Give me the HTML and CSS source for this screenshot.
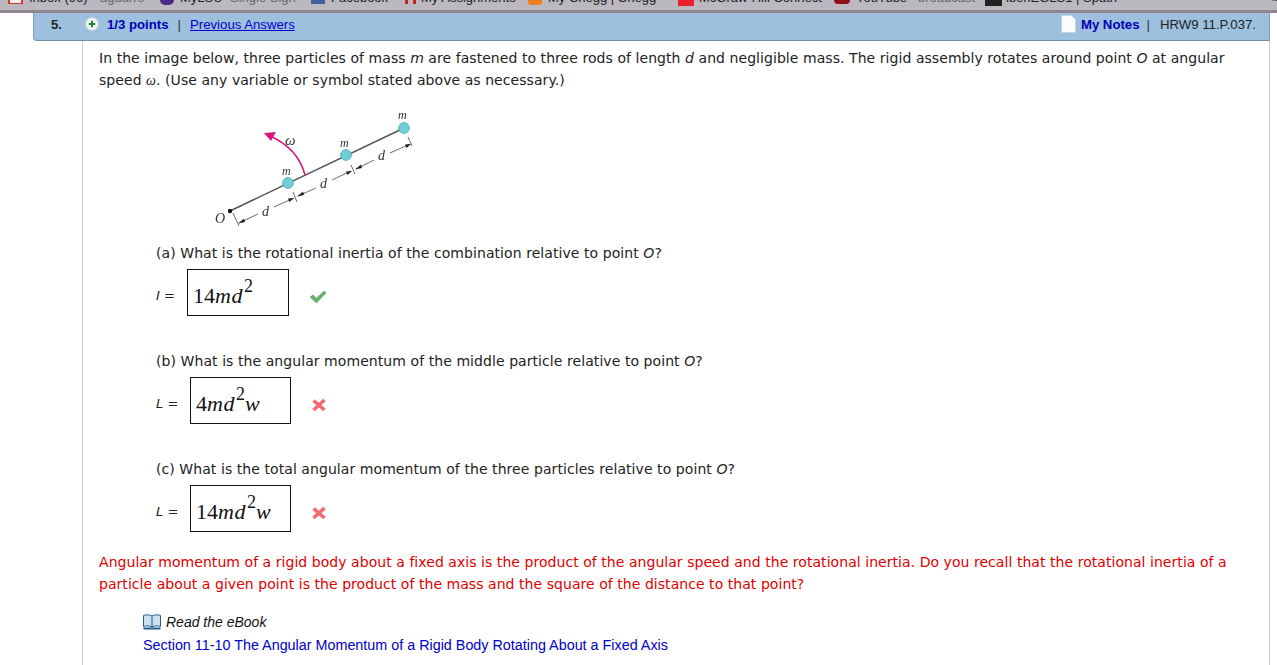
FILE: index.html
```html
<!DOCTYPE html>
<html lang="en">
<head>
  <meta charset="utf-8">
  <title>HRW9 11.P.037</title>
  <link rel="stylesheet" href="styles.css">
</head>
<body>
  <div class="bookmarks">
    <span class="icon icon-gmail"></span><span class="mark mark-inbox">Inbox (96)</span><span class="mark mark-agu fade">aguarrs</span>
    <span class="icon icon-lsu"></span><span class="mark mark-lsu">MyLSU</span><span class="mark mark-sign fade">Single Sign</span>
    <span class="icon icon-fb"></span><span class="mark mark-fb">Facebook</span>
    <span class="icon icon-a"></span><span class="mark mark-assign">My Assignments</span>
    <span class="icon icon-chegg"></span><span class="mark mark-chegg">My Chegg | Chegg</span>
    <span class="icon icon-mcg"></span><span class="mark mark-mcg">McGraw-Hill Connect</span>
    <span class="icon icon-yt"></span><span class="mark mark-yt">YouTube</span><span class="mark mark-cast fade">broadcast</span>
    <span class="icon icon-puzzle"></span><span class="mark mark-iben">ibenEGLS1 | Spath</span>
    <span class="mark mark-more">»</span>
  </div>

  <div class="header">
    <div class="header-left">
      <span class="number">5.</span>
      <span class="plus">
        <svg viewBox="0 0 14 14" width="14" height="14">
          <circle cx="7" cy="7" r="6.5" fill="#f2f4f3" stroke="#c5ccd2"/>
          <path d="M7 3.8v6.4M3.8 7h6.4" stroke="#1d8a2c" stroke-width="2"/>
        </svg>
      </span>
      <span class="points">1/3 points</span>
      <span class="sep">|</span>
      <a class="prev" href="#">Previous Answers</a>
    </div>
    <div class="header-right">
      <svg class="note" viewBox="0 0 15 18" width="15" height="18">
        <path d="M.5.5h10l4 4v13H.5z" fill="#fbfcfc" stroke="#c6d3de"/>
      </svg>
      <span class="notes">My Notes</span>
      <span class="sep">|</span>
      <span class="code">HRW9 11.P.037.</span>
    </div>
  </div>

  <div class="content">
    <p class="intro">In the image below, three particles of mass <i>m</i> are fastened to three rods of length <i>d</i> and negligible mass. The rigid assembly rotates around point <i>O</i> at angular speed <i class="omega">ω</i>. (Use any variable or symbol stated above as necessary.)</p>

    <svg class="figure" viewBox="0 0 230 135" width="230" height="135">
      <line x1="30" y1="110" x2="204" y2="27" stroke="#555" stroke-width="1.5"/>
      <path d="M105 74C100 55 88 43 70 35" fill="none" stroke="#d6187c" stroke-width="1.6"/>
      <path d="M64 32l12-1-5 9z" fill="#d6187c"/>
      <circle cx="30" cy="110" r="2.2" fill="#111"/>
      <g fill="#6fcfd8" stroke="#4aa9b5" stroke-width=".8">
        <circle cx="88" cy="82" r="5.4"/>
        <circle cx="146" cy="54" r="5.4"/>
        <circle cx="204" cy="27" r="5.4"/>
      </g>
      <g stroke="#444" stroke-width=".8">
        <line x1="33" y1="112" x2="39" y2="125"/>
        <line x1="93" y1="91" x2="97" y2="101"/>
        <line x1="151" y1="64" x2="155" y2="73"/>
        <line x1="208" y1="36" x2="212" y2="45"/>
        <line x1="39" y1="122" x2="58" y2="113"/>
        <line x1="74" y1="106" x2="94" y2="97"/>
        <line x1="98" y1="95" x2="116" y2="87"/>
        <line x1="132" y1="79" x2="151" y2="70"/>
        <line x1="156" y1="68" x2="174" y2="59"/>
        <line x1="190" y1="52" x2="210" y2="43"/>
      </g>
      <g fill="#222">
        <path d="M38 122.500l6-5 1 3.500z"/>
        <path d="M94 97l-6 .5 1.500 3.500z"/>
        <path d="M97 95.500l6-5 1 3.500z"/>
        <path d="M152 70l-6 .5 1.500 3.500z"/>
        <path d="M155 68.500l6-5 1 3.500z"/>
        <path d="M211 43l-6 .5 1.500 3.500z"/>
      </g>
      <g class="fig-text">
        <text x="15" y="122" font-size="14">O</text>
        <text x="62" y="115" font-size="14">d</text>
        <text x="120" y="87" font-size="14">d</text>
        <text x="178" y="59" font-size="14">d</text>
        <text x="82" y="74" font-size="12">m</text>
        <text x="140" y="46" font-size="12">m</text>
        <text x="198" y="18" font-size="12">m</text>
        <text x="85" y="44" font-size="15">ω</text>
      </g>
    </svg>

    <div class="question">
      <p class="ask">(a) What is the rotational inertia of the combination relative to point <i>O</i>?</p>
      <div class="answer">
        <span class="label"><i>I</i> =</span>
        <span class="box box-a">14<i>md</i><sup>2</sup></span>
        <svg class="mark-icon" viewBox="0 0 18 14" width="18" height="14">
          <path d="M1 7l3-2 3.500 3L15 1l2 2-9.500 10z" fill="#6db26b" stroke="#4f9a50" stroke-width=".5"/>
        </svg>
      </div>
    </div>

    <div class="question">
      <p class="ask">(b) What is the angular momentum of the middle particle relative to point <i>O</i>?</p>
      <div class="answer">
        <span class="label"><i>L</i> =</span>
        <span class="box">4<i>md</i><sup>2</sup><i>w</i></span>
        <svg class="mark-icon" viewBox="0 0 16 14" width="16" height="14">
          <path d="M2.500 2.500l11 9.500M13.500 2l-11 10" stroke="#f4696f" stroke-width="3.600"/>
        </svg>
      </div>
    </div>

    <div class="question question-last">
      <p class="ask">(c) What is the total angular momentum of the three particles relative to point <i>O</i>?</p>
      <div class="answer">
        <span class="label"><i>L</i> =</span>
        <span class="box">14<i>md</i><sup>2</sup><i>w</i></span>
        <svg class="mark-icon" viewBox="0 0 16 14" width="16" height="14">
          <path d="M2.500 2.500l11 9.500M13.500 2l-11 10" stroke="#f4696f" stroke-width="3.600"/>
        </svg>
      </div>
    </div>

    <p class="hint">Angular momentum of a rigid body about a fixed axis is the product of the angular speed and the rotational inertia. Do you recall that the rotational inertia of a particle about a given point is the product of the mass and the square of the distance to that point?</p>

    <div class="ebook">
      <div class="read">
        <svg viewBox="0 0 18 16" width="18" height="16">
          <path d="M.5 1.500C3 .5 6 .5 9 2c3-1.500 6-1.500 8.500-.5v11c-2.500-1-5.500-1-8.500.5-3-1.500-6-1.500-8.500-.5z" fill="#cfe0ee" stroke="#1f5f93"/>
          <path d="M9 2v11" stroke="#1f5f93"/>
          <path d="M.5 14.500h17" stroke="#1f5f93" stroke-width="2"/>
        </svg>
        <i>Read the eBook</i>
      </div>
      <a class="section" href="#">Section 11-10 The Angular Momentum of a Rigid Body Rotating About a Fixed Axis</a>
    </div>
  </div>
</body>
</html>
```

FILE: styles.css
```css
html, body {
  margin: 0;
  padding: 0;
  height: 665px;
  overflow: hidden;
  background: #fff;
}

body {
  font-family: "DejaVu Sans", Verdana, sans-serif;
  font-size: 14px;
  color: #222;
}

/* browser bookmarks bar, only its lower edge is in the shot */
.bookmarks {
  height: 10px;
  background: #bcb8bf;
  border-bottom: 3px solid #8f8490;
  overflow: hidden;
  display: flex;
  align-items: flex-start;
  font-family: "Liberation Sans", Arial, sans-serif;
  font-size: 13px;
  line-height: 13px;
  white-space: nowrap;
}

.mark {
  margin-top: -9px;
  color: #222;
  flex: none;
}

.fade {
  color: #666;
}

.icon {
  height: 5px;
  flex: none;
}

.icon-gmail { margin-left: 8px; width: 15px; height: 4px; background: #f4f0f0; border: solid #d8352c; border-width: 0 2px 1px; box-sizing: border-box; }
.mark-inbox { margin-left: 6px; width: 56px; }
.mark-agu { margin-left: 15px; width: 45px; }
.icon-lsu { margin-left: 15px; width: 14px; height: 5px; background: #4a2a85; border-radius: 0 0 7px 7px; }
.mark-lsu { margin-left: 6px; width: 36px; }
.mark-sign { margin-left: 14px; width: 60px; }
.icon-fb { margin-left: 21px; width: 14px; height: 4px; background: #3f5f9e; }
.mark-fb { margin-left: 6px; width: 52px; }
.icon-a { margin-left: 22px; width: 11px; height: 4px; border: solid #c8201c; border-width: 0 3px; box-sizing: border-box; }
.mark-assign { margin-left: 5px; width: 89px; }
.icon-chegg { margin-left: 18px; width: 14px; background: #f07d1f; border-radius: 0 0 3px 3px; }
.mark-chegg { margin-left: 6px; width: 92px; }
.icon-mcg { margin-left: 38px; width: 16px; height: 6px; background: #e8202a; }
.mark-mcg { margin-left: 5px; width: 116px; }
.icon-yt { margin-left: 19px; width: 16px; height: 4px; background: #8f1014; border-radius: 0 0 5px 5px; }
.mark-yt { margin-left: 6px; width: 49px; }
.mark-cast { margin-left: 13px; width: 52px; }
.icon-puzzle { margin-left: 15px; width: 17px; height: 6px; background: #222; }
.mark-iben { margin-left: 4px; width: 118px; }
.mark-more { margin-left: 148px; }

.header {
  margin: 0 7px 0 33px;
  height: 28px;
  padding-bottom: 5px;
  box-sizing: border-box;
  background: #9dc0de;
  border-bottom: 1px solid #6f8fa9;
  border-left: 1px solid #7f9fb9;
  border-right: 1px solid #7f9fb9;
  border-radius: 0 0 0 4px;
  display: flex;
  justify-content: space-between;
  align-items: center;
  font-family: "Liberation Sans", Arial, sans-serif;
  font-size: 13.2px;
}

.header-left,
.header-right {
  display: flex;
  align-items: center;
}

.number {
  font-weight: bold;
  margin-left: 17px;
  width: 34px;
}

.plus {
  display: flex;
  width: 22px;
}

.points {
  font-weight: bold;
  color: #0000b4;
}

.sep {
  margin: 0 9px;
  color: #333;
}

.prev {
  color: #0000c8;
}

.note {
  margin-right: 5px;
}

.notes {
  font-weight: bold;
  color: #0000b4;
}

.header-right .sep {
  margin: 0 10px 0 7px;
}

.code {
  margin-right: 13px;
  color: #222;
}

.content {
  margin: 0 7px 0 82px;
  height: 630px;
  padding: 6px 0 0 16px;
  border-left: 1px solid #ccc;
  border-right: 1px solid #ccc;
  box-sizing: border-box;
}

.intro {
  margin: 0;
  line-height: 22px;
  letter-spacing: 0.06px;
  width: 1140px;
}

.omega {
  font-family: "Liberation Serif", serif;
}

.figure {
  display: block;
  margin: 9px 0 0 101px;
  filter: blur(0.35px);
}

.fig-text {
  font-family: "Liberation Serif", serif;
  font-style: italic;
  fill: #333;
}

.question {
  margin: 6px 0 0 57px;
}

.question + .question {
  margin-top: 34px;
}

.ask {
  margin: 0;
  line-height: 22px;
  letter-spacing: 0.07px;
}

.answer {
  display: flex;
  align-items: center;
  height: 47px;
  margin-top: 5px;
}

.label {
  font-size: 13px;
  width: 34px;
  position: relative;
  top: 3px;
}

.box {
  box-sizing: border-box;
  width: 101px;
  height: 47px;
  border: 1px solid #111;
  padding: 14px 0 0 5px;
  font-family: "Liberation Serif", serif;
  font-size: 22px;
  line-height: 24px;
  color: #111;
  white-space: nowrap;
}

.box i {
  letter-spacing: 0.6px;
}

.box-a {
  margin-left: -3px;
  width: 102px;
}

.box sup {
  font-size: 18px;
  line-height: 0;
  vertical-align: 11px;
  margin: 0 0 0 1px;
}

.mark-icon {
  margin-left: 20px;
  position: relative;
  top: 4px;
}

.hint {
  margin: 19px 0 0;
  color: #e00000;
  line-height: 22px;
  letter-spacing: 0.05px;
  width: 1140px;
}

.ebook {
  margin: 16px 0 0 44px;
  font-family: "Liberation Sans", Arial, sans-serif;
  font-size: 14px;
}

.read {
  display: flex;
  align-items: center;
  gap: 5px;
  height: 22px;
  color: #111;
}

.section {
  display: block;
  margin-top: 4px;
  font-size: 14.35px;
  color: #0000c8;
  text-decoration: none;
}
```
